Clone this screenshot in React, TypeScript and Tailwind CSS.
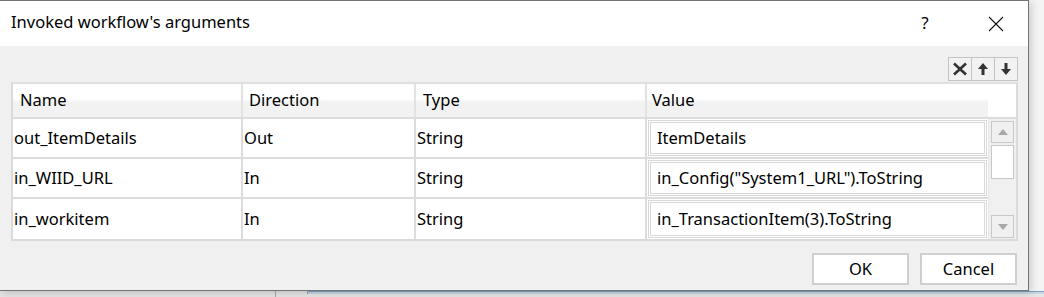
import React from "react";

const rows = [
  { name: "out_ItemDetails", dir: "Out", type: "String", value: "ItemDetails" },
  { name: "in_WIID_URL", dir: "In", type: "String", value: 'in_Config("System1_URL").ToString' },
  { name: "in_workitem", dir: "In", type: "String", value: "in_TransactionItem(3).ToString" },
];

const font = { fontFamily: '"Noto Sans", "Open Sans", sans-serif' };

function ToolButton({ children }: { children: React.ReactNode }) {
  return (
    <div className="w-[24px] h-[24px] border border-[#c4c4c4] bg-[#f2f2f2] flex items-center justify-center -ml-px first:ml-0">
      {children}
    </div>
  );
}

export default function App() {
  return (
    <div className="relative w-[1044px] h-[297px] bg-[#f4f4f4] overflow-hidden text-black" style={font}>
      {/* window behind the dialog */}
      <div className="absolute left-0 top-[291px] w-[1044px] h-[6px] bg-[#e6e6e6]" />
      <div className="absolute left-[275px] top-[291px] w-px h-[6px] bg-[#a8a8a8]" />
      <div className="absolute left-[307px] top-[291px] w-[737px] h-[3px] border-t border-l border-[#7fa0bf] rounded-tl-[2px] bg-[#c9d8e6]" />
      <div className="absolute left-[275px] top-0 w-px h-[2px] bg-[#a8a8a8]" />

      {/* dialog */}
      <div className="relative w-[1029px] h-[291px] border-t border-r border-b border-[#747474] bg-[#f0f0f0] flex flex-col shadow-[2px_2px_8px_rgba(0,0,0,0.18)]">
        {/* title bar */}
        <div className="h-[45px] bg-white flex items-center shrink-0">
          <div className="pl-[11px] text-[16.5px] leading-none pb-[2px]">Invoked workflow's arguments</div>
          <div className="ml-auto flex items-center">
            <div className="w-[20px] text-center text-[17px] leading-none mr-[53px] pb-[2px]">?</div>
            <svg width="16" height="16" viewBox="0 0 16 16" className="mr-[24px]">
              <path d="M1 1 L15 15 M15 1 L1 15" stroke="#111" strokeWidth="1.1" />
            </svg>
          </div>
        </div>

        {/* body */}
        <div className="flex-1 pl-[11px] pr-[10px] pt-[11px]">
          <div className="flex justify-end h-[25px]">
            <ToolButton>
              <svg width="16" height="14" viewBox="0 0 16 14">
                <path d="M2 1.5 L14 12.5 M14 1.5 L2 12.5" stroke="#333" strokeWidth="2.6" />
              </svg>
            </ToolButton>
            <ToolButton>
              <svg width="12" height="14" viewBox="0 0 12 14">
                <path d="M6 1 L11 7 L7.5 7 L7.5 13 L4.5 13 L4.5 7 L1 7 Z" fill="#333" />
              </svg>
            </ToolButton>
            <ToolButton>
              <svg width="12" height="14" viewBox="0 0 12 14">
                <path d="M6 13 L11 7 L7.5 7 L7.5 1 L4.5 1 L4.5 7 L1 7 Z" fill="#333" />
              </svg>
            </ToolButton>
          </div>

          {/* grid */}
          <div className="w-[1007px] border-2 border-[#dadada] border-t-[#e0e0e0] flex bg-white">
            <div className="w-[975px]">
              <div className="flex h-[35px] text-[16.5px] border-b-2 border-[#dcdcdc] bg-[linear-gradient(to_bottom,#ffffff_0%,#ffffff_45%,#f2f2f2_55%,#f2f2f2_100%)]">
                <div className="w-[230px] pl-[7px] border-r-2 border-[#e2e2e2] flex items-center">Name</div>
                <div className="w-[173px] pl-[6px] border-r-2 border-[#e2e2e2] flex items-center">Direction</div>
                <div className="w-[231px] pl-[7px] border-r-2 border-[#e2e2e2] flex items-center">Type</div>
                <div className="flex-1 pl-[5px] flex items-center">Value</div>
              </div>
              {rows.map((r, i) => (
                <div
                  key={r.name}
                  className={`flex h-[40px] text-[16.5px] ${i < rows.length - 1 ? "border-b-2 border-[#dcdcdc]" : ""}`}
                >
                  <div className="w-[230px] pl-[1px] border-r-2 border-[#dcdcdc] flex items-center">{r.name}</div>
                  <div className="w-[173px] pl-[1px] border-r-2 border-[#dcdcdc] flex items-center">{r.dir}</div>
                  <div className="w-[231px] pl-[1px] border-r-2 border-[#dcdcdc] flex items-center">{r.type}</div>
                  <div className="flex-1 pl-[1px] pr-[1px] py-[1px] flex">
                    <div className="flex-1 border-[3px] border-double border-[#d8d8d8] flex items-center pl-[6px]">
                      {r.value}
                    </div>
                  </div>
                </div>
              ))}
            </div>
            {/* scrollbar column */}
            <div className="w-[28px] flex flex-col">
              <div className="h-[35px] bg-white border-b-2 border-[#dcdcdc]" />
              <div className="flex-1 bg-[#f0f0f0] border-l border-[#e6e6e6] flex flex-col items-center pt-[2px] pb-[1px]">
                <div className="w-[23px] h-[22px] border border-[#c8c8c8] bg-[#f0f0f0] flex items-center justify-center">
                  <svg width="10" height="6" viewBox="0 0 10 6"><path d="M0 6 L5 0 L10 6 Z" fill="#a8a8a8" /></svg>
                </div>
                <div className="w-[23px] h-[34px] mt-[2px] border border-[#c8c8c8] bg-white" />
                <div className="flex-1" />
                <div className="w-[23px] h-[23px] border border-[#c8c8c8] bg-[#f0f0f0] flex items-center justify-center">
                  <svg width="10" height="6" viewBox="0 0 10 6"><path d="M0 0 L5 6 L10 0 Z" fill="#a8a8a8" /></svg>
                </div>
              </div>
            </div>
          </div>

          {/* buttons */}
          <div className="flex justify-end gap-[11px] mt-[12px] pr-[1px]">
            <button className="w-[97px] h-[32px] border-2 border-[#cfcfcf] bg-white text-[16.5px]" style={font}>OK</button>
            <button className="w-[97px] h-[32px] border-2 border-[#cfcfcf] bg-white text-[16.5px]" style={font}>Cancel</button>
          </div>
        </div>
      </div>
    </div>
  );
}
